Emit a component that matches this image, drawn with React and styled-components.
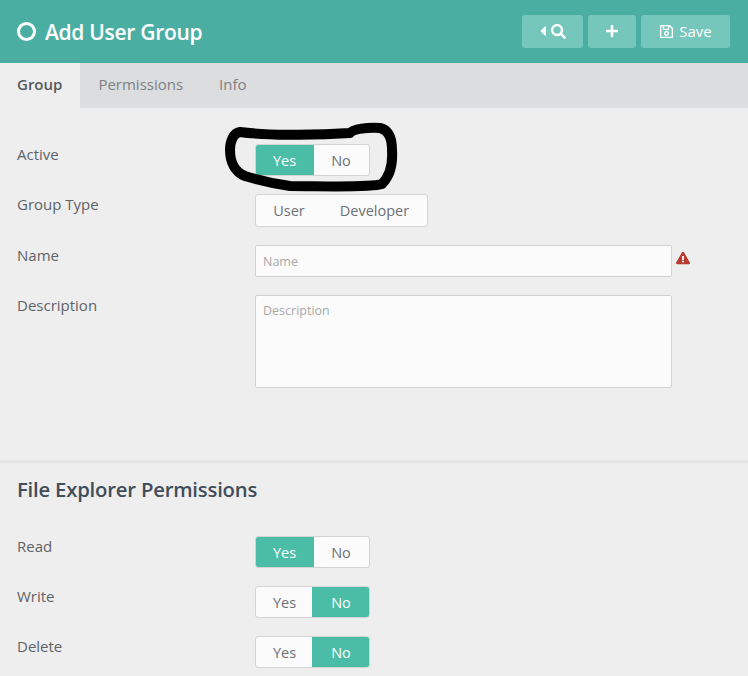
import React from 'react';
import styled, { createGlobalStyle } from 'styled-components';
import { FaSearch, FaPlus, FaCaretLeft, FaRegSave, FaExclamationTriangle } from 'react-icons/fa';

const GlobalStyle = createGlobalStyle`
  html, body {
    margin: 0;
    padding: 0;
    height: 100%;
    overflow: hidden;
    background: #eeeeee;
    font-family: "Open Sans", "Noto Sans", "Liberation Sans", sans-serif;
  }
  * {
    box-sizing: border-box;
  }
`;

const Page = styled.div`
  position: relative;
  width: 748px;
  height: 676px;
  overflow: hidden;
  background: #eeeeee;
`;

const Header = styled.header`
  display: flex;
  justify-content: space-between;
  align-items: center;
  height: 63px;
  padding: 0 18px 0 17px;
  background: #4baea3;
`;

const Title = styled.h1`
  display: flex;
  align-items: center;
  gap: 9px;
  margin: 0;
  color: #ffffff;
  font-size: 21px;
  font-weight: 600;
  letter-spacing: -0.3px;
`;

const Ring = styled.span`
  width: 19px;
  height: 19px;
  border: 3px solid #ffffff;
  border-radius: 50%;
`;

const Actions = styled.div`
  display: flex;
  gap: 5px;
  margin-top: -1px;
`;

const ActionButton = styled.button`
  display: flex;
  justify-content: center;
  align-items: center;
  gap: 5px;
  width: ${(p) => p.$width}px;
  height: 33px;
  padding: 0;
  border: 0;
  border-radius: 3px;
  background: #75c6bb;
  color: #ffffff;
  font-family: inherit;
  font-size: 15px;
`;

const BackSearch = styled.span`
  display: flex;
  align-items: center;
  padding-right: 4px;
`;

const Tabs = styled.nav`
  display: flex;
  height: 45px;
  background: #dcddde;
`;

const Tab = styled.div`
  display: flex;
  align-items: center;
  padding: 0 18px 3px ${(p) => (p.$active ? 17 : 18)}px;
  background: ${(p) => (p.$active ? '#eeeeee' : 'transparent')};
  color: ${(p) => (p.$active ? '#555a5f' : '#7d8185')};
  font-size: 15px;
  font-weight: ${(p) => (p.$active ? 600 : 400)};
`;

const Form = styled.section`
  display: flex;
  flex-direction: column;
  gap: 18px;
  height: 355px;
  padding: 36px 0 0 17px;
  border-bottom: 3px solid #e3e3e3;
`;

const Row = styled.div`
  display: grid;
  grid-template-columns: 238px auto;
  justify-content: start;
  align-items: start;
`;

const Label = styled.label`
  color: #5f6367;
  font-size: 15px;
  line-height: 20px;
`;

const Toggle = styled.div`
  display: inline-flex;
  height: 32.4px;
  overflow: hidden;
  border: 1px solid #d4d4d4;
  border-radius: 3px;
  background: #fbfbfb;
`;

const ToggleOption = styled.span`
  display: flex;
  justify-content: center;
  align-items: center;
  width: ${(p) => p.$width}px;
  margin: ${(p) => (p.$active ? '-1px' : '0')};
  background: ${(p) => (p.$active ? '#4bbda6' : 'transparent')};
  color: ${(p) => (p.$active ? '#ffffff' : '#6b7077')};
  font-size: 14.5px;
`;

const InputWrap = styled.div`
  display: flex;
  align-items: flex-start;
  gap: 4px;
`;

const TextField = styled.input`
  width: 417px;
  height: 32.4px;
  padding: 1px 7px 0;
  border: 1px solid #d2d2d2;
  border-radius: 2px;
  background: #fbfbfb;
  font-family: inherit;
  font-size: 12.5px;

  &::placeholder {
    color: #a9a9a9;
  }
`;

const TextBox = styled.textarea`
  display: block;
  width: 417px;
  height: 93px;
  padding: 6px 7px;
  border: 1px solid #d2d2d2;
  border-radius: 2px;
  background: #fbfbfb;
  font-family: inherit;
  font-size: 12.5px;
  resize: none;

  &::placeholder {
    color: #a9a9a9;
  }
`;

const Warning = styled(FaExclamationTriangle)`
  margin-top: 6px;
  color: #b93a2e;
  font-size: 14px;
`;

const Permissions = styled.section`
  padding: 0 0 0 17px;
`;

const SectionTitle = styled.h2`
  margin: 12px 0 33px;
  color: #414d58;
  font-size: 20.3px;
  font-weight: 600;
  line-height: 28px;
  letter-spacing: -0.2px;
`;

const PermissionRows = styled.div`
  display: flex;
  flex-direction: column;
  gap: 17.6px;
`;

const Scribble = styled.svg`
  position: absolute;
  top: 0;
  left: 0;
  pointer-events: none;
`;

const YesNo = ({ value }) => (
  <Toggle>
    <ToggleOption $width={value ? 59 : 57} $active={value}>Yes</ToggleOption>
    <ToggleOption $width={value ? 56 : 58} $active={!value}>No</ToggleOption>
  </Toggle>
);

const App = () => {
  return (
    <Page>
      <GlobalStyle />
      <Header>
        <Title>
          <Ring />
          Add User Group
        </Title>
        <Actions>
          <ActionButton $width={61}>
            <BackSearch>
              <FaCaretLeft size={16} />
              <FaSearch size={15} />
            </BackSearch>
          </ActionButton>
          <ActionButton $width={48}>
            <FaPlus size={14} />
          </ActionButton>
          <ActionButton $width={89}>
            <FaRegSave size={15} />
            Save
          </ActionButton>
        </Actions>
      </Header>
      <Tabs>
        <Tab $active>Group</Tab>
        <Tab>Permissions</Tab>
        <Tab>Info</Tab>
      </Tabs>
      <Form>
        <Row>
          <Label>Active</Label>
          <YesNo value />
        </Row>
        <Row>
          <Label>Group Type</Label>
          <Toggle>
            <ToggleOption $width={66}>User</ToggleOption>
            <ToggleOption $width={105}>Developer</ToggleOption>
          </Toggle>
        </Row>
        <Row>
          <Label>Name</Label>
          <InputWrap>
            <TextField placeholder="Name" />
            <Warning />
          </InputWrap>
        </Row>
        <Row>
          <Label>Description</Label>
          <TextBox placeholder="Description" />
        </Row>
      </Form>
      <Permissions>
        <SectionTitle>File Explorer Permissions</SectionTitle>
        <PermissionRows>
          <Row>
            <Label>Read</Label>
            <YesNo value />
          </Row>
          <Row>
            <Label>Write</Label>
            <YesNo value={false} />
          </Row>
          <Row>
            <Label>Delete</Label>
            <YesNo value={false} />
          </Row>
        </PermissionRows>
      </Permissions>
      <Scribble width="748" height="676" viewBox="0 0 748 676" fill="none">
        <path
          d="M240 132 C 262 135 310 136 350 133 C 353 129 368 127 380 128 C 389 130 392 138 392 150 C 393 165 390 176 382 184 C 370 188 320 186 290 186 C 275 184 258 180 245 176 C 235 172 230 162 230 150 C 230 142 233 133 240 132 Z"
          stroke="#000000"
          strokeWidth="10"
          strokeLinejoin="round"
        />
      </Scribble>
    </Page>
  );
};

export default App;
